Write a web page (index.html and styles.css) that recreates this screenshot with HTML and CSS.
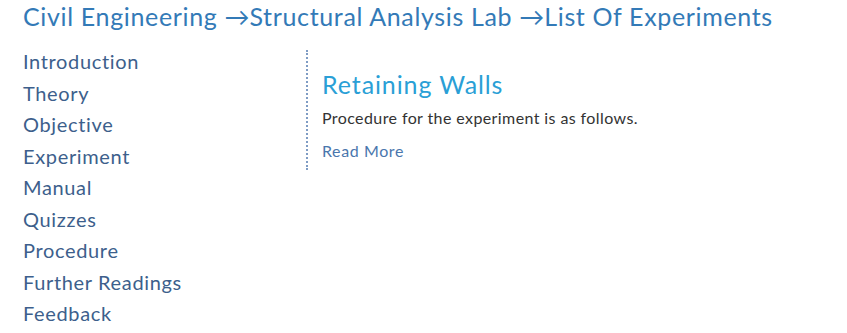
FILE: index.html
```html
<!DOCTYPE html>
<html lang="en">
<head>
<meta charset="utf-8">
<title>List Of Experiments</title>
<link rel="stylesheet" href="styles.css">
</head>
<body>
<header class="crumbs">
  <a class="crumb" href="#">Civil Engineering</a> <span class="arrow">&rarr;</span><a class="crumb" href="#">Structural Analysis Lab</a> <span class="arrow">&rarr;</span><a class="crumb" href="#">List Of Experiments</a>
</header>
<div class="layout">
  <nav class="sidebar">
    <a href="#">Introduction</a>
    <a href="#">Theory</a>
    <a href="#">Objective</a>
    <a href="#">Experiment</a>
    <a href="#">Manual</a>
    <a href="#">Quizzes</a>
    <a href="#">Procedure</a>
    <a href="#">Further Readings</a>
    <a href="#">Feedback</a>
  </nav>
  <main class="content">
    <h2 class="title">Retaining Walls</h2>
    <p class="desc">Procedure for the experiment is as follows.</p>
    <a class="more" href="#">Read More</a>
  </main>
</div>
</body>
</html>
```
FILE: styles.css
```css
* { box-sizing: border-box; }
body {
  margin: 0;
  background: #fff;
  font-family: "Lato", "Open Sans", sans-serif;
  color: #333;
}
a { text-decoration: none; }
.crumbs {
  padding: 0 0 0 23px;
  font-size: 25px;
  letter-spacing: 0.65px;
  line-height: 32px;
  color: #337ab7;
  white-space: nowrap;
}
.crumb { color: #337ab7; }
.arrow { color: #337ab7; letter-spacing: 0; }
.layout {
  display: flex;
  align-items: flex-start;
  padding-left: 23px;
  margin-top: 14px;
}
.sidebar {
  width: 283px;
  display: flex;
  flex-direction: column;
}
.sidebar a {
  font-size: 20px;
  letter-spacing: 0.65px;
  line-height: 31.5px;
  color: #3d5f8c;
}
.content {
  border-left: 2px dotted #7f9cc4;
  padding: 18px 0 9px 14px;
  margin-top: 4px;
}
.title {
  margin: 0;
  font-weight: 400;
  font-size: 25px;
  letter-spacing: 0.9px;
  line-height: 32px;
  color: #2a9fd6;
}
.desc {
  margin: 6px 0 0;
  font-size: 16px;
  letter-spacing: 0.4px;
  line-height: 24px;
}
.more {
  display: block;
  margin-top: 11px;
  font-size: 16px;
  letter-spacing: 0.6px;
  line-height: 20px;
  color: #4a76ad;
}
```
